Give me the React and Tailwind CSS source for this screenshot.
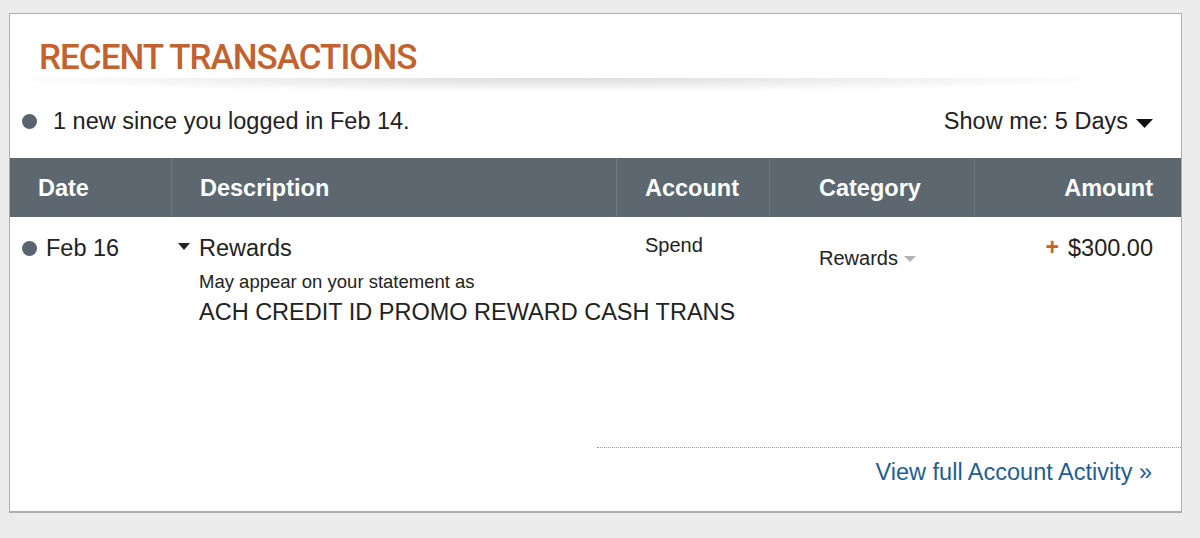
import React from 'react';

const COLS = 'grid grid-cols-[161px_445px_153px_205px_1fr]';

function Caret({ className = '', w = 12, h = 7 }) {
  return (
    <svg width={w} height={h} viewBox={`0 0 ${w} ${h}`} className={className}>
      <polygon points={`0,0 ${w},0 ${w / 2},${h}`} fill="currentColor" />
    </svg>
  );
}

function Dot() {
  return <span className="block w-[15px] h-[15px] rounded-full bg-[#5a6470] shrink-0" />;
}

export default function App() {
  return (
    <div className="h-[538px] w-[1200px] bg-[#ececec] pt-[13px] pl-[9px] font-['Liberation_Sans',Arial,sans-serif] text-[#222]">
      <div className="w-[1173px] h-[500px] bg-white border border-[#adadad] border-b-2 flex flex-col">
        {/* title */}
        <h2 className="mt-[26px] pl-[29px] font-['Roboto',sans-serif] font-medium text-[35px] leading-[35px] tracking-[-1px] text-[#c1622f]">
          RECENT TRANSACTIONS
        </h2>
        <div className="mt-[3px] w-[1140px] h-[14px] bg-[radial-gradient(ellipse_50%_100%_at_48%_0%,#dcdcdc,rgba(255,255,255,0))]" />

        {/* info row */}
        <div className="h-[66px] pt-[16px] flex items-start justify-between pl-[12px] pr-[28px] text-[23.5px] leading-[26px]">
          <div className="flex items-center gap-[16px]">
            <Dot />
            <span>1 new since you logged in Feb 14.</span>
          </div>
          <div className="flex items-center gap-[8px]">
            <span>Show me: 5 Days</span>
            <Caret w={17} h={9} className="text-[#111] mt-[4px]" />
          </div>
        </div>

        {/* table header */}
        <div className={`${COLS} h-[59px] bg-[#5c6770] text-white font-bold text-[23.5px] leading-[26px]`}>
          <div className="flex items-center pl-[28px]">Date</div>
          <div className="flex items-center pl-[28px] border-l border-[#6f7982]">Description</div>
          <div className="flex items-center pl-[28px] border-l border-[#6f7982]">Account</div>
          <div className="flex items-center pl-[49px] border-l border-[#6f7982]">Category</div>
          <div className="flex items-center justify-end pr-[28px] border-l border-[#6f7982]">Amount</div>
        </div>

        {/* transaction row */}
        <div className={`${COLS} h-[230px] items-start`}>
          <div className="pt-[18px] pl-[12px] flex items-center gap-[9px] text-[23.5px] leading-[26px]">
            <Dot />
            <span>Feb 16</span>
          </div>
          <div className="pt-[18px] pl-[7px]">
            <div className="flex items-center gap-[9px] text-[23.5px] leading-[26px]">
              <Caret w={12} h={7} className="text-[#222] -mt-[3px]" />
              <span>Rewards</span>
            </div>
            <div className="pl-[21px] mt-[10px] text-[18.5px] leading-[22px]">May appear on your statement as</div>
            <div className="pl-[21px] mt-[6px] text-[23.5px] leading-[26px] whitespace-nowrap">
              ACH CREDIT ID PROMO REWARD CASH TRANS
            </div>
          </div>
          <div className="pt-[16px] pl-[29px] text-[20px] leading-[24px]">Spend</div>
          <div className="pt-[29px] pl-[50px] text-[20px] leading-[24px] flex items-center gap-[6px]">
            <span>Rewards</span>
            <Caret w={12} h={6} className="text-[#b3b3b3] mt-[2px]" />
          </div>
          <div className="pt-[18px] pr-[28px] flex items-center justify-end gap-[9px] text-[23.5px] leading-[26px]">
            <span className="text-[#c1622f] font-bold text-[23px] leading-[26px] -mt-[2px]">+</span>
            <span>$300.00</span>
          </div>
        </div>

        {/* footer */}
        <div className="flex justify-end">
          <div className="w-[584px] border-t border-dotted border-[#9a9a9a]" />
        </div>
        <div className="pt-[11px] pr-[29px] flex justify-end text-[23.5px] leading-[26px]">
          <a href="#" className="text-[#1f5e91]">View full Account Activity »</a>
        </div>
      </div>
    </div>
  );
}
